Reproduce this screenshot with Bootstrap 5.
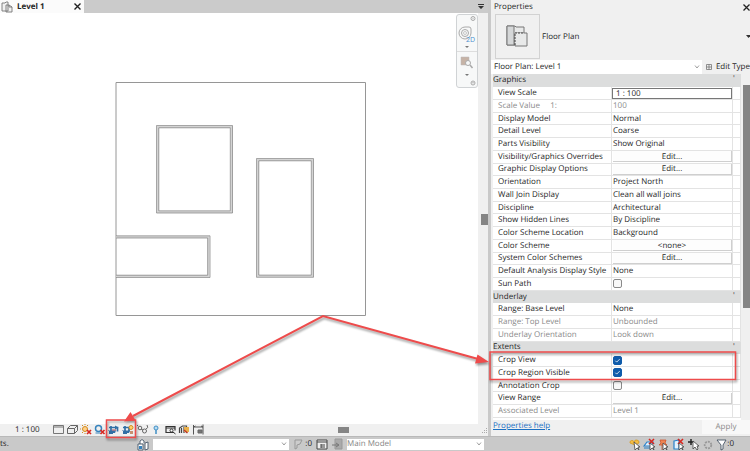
<!DOCTYPE html>
<html lang="en">
<head>
<meta charset="utf-8">
<meta name="viewport" content="width=device-width, initial-scale=1">
<title>Floor Plan: Level 1</title>
<link href="https://cdn.jsdelivr.net/npm/bootstrap@5.3.0/dist/css/bootstrap.min.css" rel="stylesheet">
<style>
  body { font: 8px/12px "Open Sans", "Noto Sans", sans-serif; color: #262626; background: #f0f0f0; text-rendering: geometricPrecision; }
  button, input, select { font: inherit; color: inherit; border: 0; padding: 0; background: none; text-rendering: inherit; }
  svg { display: block; flex: none; }
  .window { min-height: 100vh; }
  .tab-strip { height: 13px; background: #cbcbcb; }
  .doc-tab { width: 84px; background: #fbfbfb; padding: 0 3px 0 1px; }
  .canvas { background: #fff; }
  .plan { min-width: 0; }
  .view-nav { width: 22px; height: 74px; margin-top: 1px; background: #f7f8f8; border: 1px solid #d0d3d5; border-radius: 3px; padding: 1px 0; }
  .v-track { width: 10px; background: #f0f0f0; }
  .v-thumb { width: 7px; height: 11px; background: #858585; margin-top: 201px; }
  .view-bar { height: 12px; padding-left: 15px; }
  .view-icons { margin-left: 13px; }
  .h-thumb { width: 11px; height: 6px; background: #858585; }
  .palette { width: 262px; border-left: 3px solid #c9c9c9; }
  .inset { padding-left: 2px; }
  .title-row { height: 14px; }
  .title-row span { padding-left: 1px; }
  .preview { width: 45px; height: 45px; border: 1px solid #d2d2d2; background: #f0f0f0; }
  .type-name { margin-left: 2px; }
  .drop { appearance: none; background: #fff url("data:image/svg+xml,%3Csvg xmlns='http://www.w3.org/2000/svg' width='6' height='4'%3E%3Cpath d='M1 .5 3 3 5 .5' fill='none' stroke='%23888' stroke-width='.8'/%3E%3C/svg%3E") no-repeat right 2px center; border-radius: 0; min-width: 0; }
  .type-row { height: 14px; margin-top: 1px; }
  .type-row .drop { padding-left: 3px; }
  .grid-wrap { min-width: 0; }
  .props { line-height: 10px; background: #fff; table-layout: fixed; }
  .props td, .props th { padding: 0 0 0 1px; border: 0 solid #e3e3e3; border-width: 0 1px 1px 0; font-weight: 400; height: 12px; white-space: nowrap; text-align: left; vertical-align: middle; }
  .props tbody th:not(.group) { padding-left: 5px; }
  .props .group { background: #dcdddd; border-color: #dcdddd; padding-left: 0; }
  .props .off > * { color: #8a8a8a; }
  .props .cell-btn { display: block; width: 100%; height: 11px; line-height: 9px; background: #fdfdfd; border: 1px solid #cfcfcf; border-width: 0 1px 1px 0; }
  .props .scale-box { display: block; width: 100%; height: 11px; border: 1px solid #777; padding-left: 3px; background: #fff; }
  .tick { display: block; appearance: none; width: 9px; height: 9px; border: 1px solid #8a8a8a; border-radius: 2px; background: #f8f8f8; }
  .tick:checked { border-color: #0f5cab; background: #0f5cab url("data:image/svg+xml,%3Csvg xmlns='http://www.w3.org/2000/svg' viewBox='0 0 7 7'%3E%3Cpath d='m1.3 3.7 1.4 1.4 3-3' fill='none' stroke='%23fff' stroke-width='.8'/%3E%3C/svg%3E") center / 7px no-repeat; }
  .table-tail { height: 2px; background: #fff; }
  .p-thumb { height: 223px; margin-top: 11px; background: #848484; }
  .p-track { width: 7px; margin-left: 2px; }
  .palette-foot { height: 16px; }
  .palette-foot a { color: #1b6fc2; }
  .apply { width: 48px; height: 14px; background: #f8f8f8; color: #8c8c8c; }
  .status { height: 15px; background: #c9c9c9; border-top: 1px solid #b9b9b9; }
  .status .drop { height: 11px; line-height: 10px; color: #858585; }
  .status-left { width: 488px; }
  .overlay { filter: drop-shadow(1px 2px 1px #0006); pointer-events: none; }
</style>
<script src="https://cdn.jsdelivr.net/npm/bootstrap@5.3.0/dist/js/bootstrap.bundle.min.js"></script>
</head>
<body>
<div class="window d-flex flex-column position-relative overflow-hidden">
  <div class="d-flex flex-fill">
    <main class="d-flex flex-column flex-fill">
      <div class="tab-strip d-flex justify-content-between">
        <div class="doc-tab d-flex align-items-center">
          <svg width="12" height="12" fill="#f1f1f1" stroke="#777" stroke-width=".9"><path d="M1 2h3l1-1h2v9H1zM5 4h3l3 2v5H5zM8 4v2h3"/></svg>
          <strong class="ms-1">Level 1</strong>
          <button class="ms-auto" aria-label="Close view"><svg width="7" height="7" stroke="#222" stroke-width="1.4"><path d="m.5.5 6 6m0-6-6 6"/></svg></button>
        </div>
        <button class="px-1" aria-label="View list"><svg width="6" height="6" fill="#333"><path d="M0 0h6v1H0zM0 2h6L3 5z"/></svg></button>
      </div>
      <div class="canvas d-flex flex-fill">
        <svg class="plan flex-fill" width="440" height="411" viewBox="0 13 456 411" preserveAspectRatio="xMinYMin meet" fill="none" stroke="#969696" role="img" aria-label="Floor plan drawing">
          <path d="M116 82.500h249.500v233H116z"/>
          <g stroke="#d4d4d4" stroke-width="2"><path d="M158 127h73.500v85H158zM258 160h54.500v116H258zM116 237h92.500v39H116"/></g>
          <g stroke="#808080" stroke-width=".7"><path d="M156.500 125.500h76v87.500h-76zM158.800 127.800h71.500v83h-71.500zM256.500 158.500h57v118.800h-57zM258.800 160.800h52.500v114.300h-52.500zM116 235.800h94v41.700h-94M116 238h91.700v37.200H116"/></g>
        </svg>
        <div class="view-nav d-flex flex-column align-items-center">
          <svg width="20" height="70" viewBox="457 16 20 70" fill="none" stroke="#aaa">
            <circle cx="473" cy="18.500" r="2"/><path d="m472 17.500 2 2m0-2-2 2" stroke-width=".5"/>
            <path d="M469 27h-4a6 6 0 1 0 6 6v-4q0-2-2-2z"/><circle cx="465" cy="33" r="3.500"/><circle cx="465" cy="33" r="1.500" stroke-width=".6"/>
            <text x="466" y="41.500" font-size="7" fill="#4a90cf" stroke="none">2D</text>
            <path d="M465 46h4l-2 2zM465 74h4l-2 2z" fill="#777" stroke="none"/><path d="M457 51.500h20" stroke="#ddd"/>
            <path d="M461 57h8v8h-8z" fill="#c6b3a6" stroke="#bbb" stroke-width=".5"/><circle cx="468" cy="63" r="2.500" fill="#f7f8f8"/><path d="m470 65 2.500 3" stroke-width="1.500"/>
            <circle cx="473" cy="83" r="2"/><path d="M472 82.500h2l-1 1z" stroke-width=".5"/>
          </svg>
        </div>
        <div class="v-track ms-auto"><div class="v-thumb ms-auto"></div></div>
      </div>
      <div class="view-bar d-flex align-items-center">
        <span>1 : 100</span>
        <div class="view-icons d-flex">
          <svg width="154" height="12" viewBox="53 424 154 12" fill="none" stroke="#666">
            <path d="M53.500 425.500h10v8h-10zM54 427h10" stroke="#777"/>
            <path d="m67.500 428.500 3-3h7v5l-3 3h-7zM67.500 428.500h7v5m0-5 3-3"/>
            <circle cx="85" cy="429" r="2.500" fill="#ffd28a" stroke="#d48b20"/><path d="M85 424v1m0 8v1m-5-5h1m1-4 1 1m5-1-1 1m-5 7 1-1" stroke="#d48b20"/><path d="m87 430 4 4m0-4-4 4" stroke="#d62821" stroke-width="1.700"/>
            <circle cx="98.500" cy="428.500" r="3" stroke="#3783bd" stroke-width="1.500"/><path d="M95.500 433h5" stroke="#3783bd"/><path d="m100.500 430 4 4m0-4-4 4" stroke="#d62821" stroke-width="1.700"/>
            <path d="M108 430.500h8l-1 2.500h-2v1h-4v-3h-1z" fill="#326fa5" stroke="none"/><path d="M111 426v5m-2-3.500h8.500v4" stroke="#326fa5" stroke-width="1.700"/><path d="m115 425.500 3.500 2-3.500 2z" fill="#326fa5" stroke="none"/><path d="M112 430h4" stroke="#a34b58"/>
            <path d="M122 430.500h8l-1 2.500h-2v1h-4v-3h-1z" fill="#326fa5" stroke="none"/><path d="M125 426v5m-2-3.500h6v4" stroke="#326fa5" stroke-width="1.700"/><circle cx="131" cy="427.500" r="2" fill="#ffd36b" stroke="#d48b20"/><path d="M130 431h3v3h-3z" fill="#c98f70" stroke="none"/>
            <circle cx="140" cy="428" r="1.800"/><circle cx="144.500" cy="431" r="2"/><path d="m141 429 2 1m3-1q3-1 1-4m-9 1-1-1"/>
            <circle cx="156" cy="428" r="2" fill="#b8dcf3" stroke="#408fc5"/><path d="M156 430v4" stroke="#408fc5" stroke-width="1.500"/>
            <path d="M174 432.500h-8v-6h9v4M166 428h9" stroke="#333" stroke-width="1.200"/><circle cx="171.500" cy="430.500" r="1.500" fill="#fff" stroke="#333"/><path d="m173 432 2.500 2" stroke="#333"/>
            <path d="M179.500 433v-5l3-2h4v7m-5-5v5m2.500-6v6" stroke="#444" stroke-width="1.200"/><path d="M184 427h5v5h-5z" fill="#e9b04a" stroke="none"/><path d="m184 430 3.500 3" stroke="#c0392b" stroke-width="1.500"/>
            <path d="M193.500 425v9.500m9.500-10v10m-9.500-7.500h9.500m-9.500 0 2-1m7.500 1-2-1" stroke="#555"/><path d="M198 430h4v3h-4z" fill="#777"/>
          </svg>
        </div>
        <div class="h-thumb ms-auto"></div>
        <svg class="ms-auto" width="7" height="7" fill="#aaa"><path d="M5 1h1v1H5zM3 3h1v1H3zm2 0h1v1H5zM1 5h1v1H1zm2 0h1v1H3zm2 0h1v1H5z"/></svg>
      </div>
    </main>

    <aside class="palette d-flex flex-column flex-shrink-0">
      <div class="title-row inset d-flex justify-content-between align-items-center"><span>Properties</span>
        <button aria-label="Close properties"><svg width="7" height="7" stroke="#222" stroke-width="1.300"><path d="m.5.5 6 6m0-6-6 6"/></svg></button>
      </div>
      <div class="d-flex align-items-center ps-1">
        <button class="preview d-flex align-items-center justify-content-center" aria-label="Type preview">
          <svg width="23" height="23" fill="#e8e9e9" stroke="#777"><path d="M1 1h8l1 1h8v18H1z"/><path d="M1 1h7v19H1z" fill="#d5d7d8"/><path d="M9 8h12v13H9z"/><path d="M9 20V8h9" stroke="#444" stroke-dasharray="2 1"/></svg>
        </button>
        <span class="type-name">Floor Plan</span>
        <button class="ms-auto" aria-label="Change type"><svg width="4" height="4" fill="#333"><path d="M0 0h5L2.500 3z"/></svg></button>
      </div>
      <div class="type-row d-flex align-items-center">
        <select class="drop flex-fill h-100" aria-label="View"><option>Floor Plan: Level 1</option></select>
        <button class="d-flex align-items-center text-nowrap ms-1"><svg class="me-1" width="6" height="6" fill="none" stroke="#777" stroke-width=".8"><path d="M.5.5h5v5h-5zM3 .5v5M.5 3h5"/></svg>Edit Type</button>
      </div>
      <div class="d-flex flex-fill">
        <div class="inset grid-wrap d-flex flex-column flex-fill">
          <div class="flex-fill d-flex">
          <table class="props w-100">
            <colgroup><col><col style="width:121px"><col style="width:8px"></colgroup>
            <tbody>
              <tr><th class="group" colspan="2">Graphics</th><td class="group align-top">'</td></tr>
              <tr><th><label for="scale">View Scale</label></th><td class="p-0"><input id="scale" class="scale-box" value="1 : 100"></td><td></td></tr>
              <tr class="off"><th>Scale Value &nbsp; &nbsp; 1:</th><td>100</td><td></td></tr>
              <tr><th>Display Model</th><td>Normal</td><td></td></tr>
              <tr><th>Detail Level</th><td>Coarse</td><td></td></tr>
              <tr><th>Parts Visibility</th><td>Show Original</td><td></td></tr>
              <tr><th>Visibility/Graphics Overrides</th><td><button class="cell-btn">Edit...</button></td><td></td></tr>
              <tr><th>Graphic Display Options</th><td><button class="cell-btn">Edit...</button></td><td></td></tr>
              <tr><th>Orientation</th><td>Project North</td><td></td></tr>
              <tr><th>Wall Join Display</th><td>Clean all wall joins</td><td></td></tr>
              <tr><th>Discipline</th><td>Architectural</td><td></td></tr>
              <tr><th>Show Hidden Lines</th><td>By Discipline</td><td></td></tr>
              <tr><th>Color Scheme Location</th><td>Background</td><td></td></tr>
              <tr><th>Color Scheme</th><td><button class="cell-btn">&lt;none&gt;</button></td><td></td></tr>
              <tr><th>System Color Schemes</th><td><button class="cell-btn">Edit...</button></td><td></td></tr>
              <tr><th>Default Analysis Display Style</th><td>None</td><td></td></tr>
              <tr><th><label for="sun">Sun Path</label></th><td><input type="checkbox" class="tick" id="sun"></td><td></td></tr>
              <tr><th class="group" colspan="2">Underlay</th><td class="group align-top">'</td></tr>
              <tr><th>Range: Base Level</th><td>None</td><td></td></tr>
              <tr class="off"><th>Range: Top Level</th><td>Unbounded</td><td></td></tr>
              <tr class="off"><th>Underlay Orientation</th><td>Look down</td><td></td></tr>
              <tr><th class="group" colspan="2">Extents</th><td class="group align-top">'</td></tr>
              <tr><th><label for="crop">Crop View</label></th><td><input type="checkbox" class="tick" id="crop" checked></td><td></td></tr>
              <tr><th><label for="region">Crop Region Visible</label></th><td><input type="checkbox" class="tick" id="region" checked></td><td></td></tr>
              <tr><th><label for="anno">Annotation Crop</label></th><td><input type="checkbox" class="tick" id="anno"></td><td></td></tr>
              <tr><th>View Range</th><td><button class="cell-btn">Edit...</button></td><td></td></tr>
              <tr class="off"><th>Associated Level</th><td>Level 1</td><td></td></tr>
            </tbody>
          </table>
          </div>
          <div class="table-tail"></div>
        </div>
        <div class="p-track flex-shrink-0"><div class="p-thumb"></div></div>
      </div>
      <div class="palette-foot inset d-flex justify-content-between"><a href="#">Properties help</a><button class="apply">Apply</button></div>
    </aside>
  </div>

  <footer class="status d-flex align-items-center justify-content-between">
    <div class="status-left d-flex align-items-center">
      <span>ts.</span>
      <svg class="ms-auto me-1" width="12" height="13" fill="#fff" stroke="#456" stroke-width=".9"><path d="M1 6h5v6H1zM3 6V3q2-3 4 0v2M8 5l3-1v7l-3 1z"/><path d="M2 8h3v3H2z" fill="#3783bd" stroke="none"/></svg>
      <select class="drop" style="width:136px" aria-label="Workset"><option></option></select>
      <svg class="ms-1" width="12" height="12" fill="#ccc" stroke="#999"><path d="M2 2h7L7 6 4 7v3L2 11V8z"/></svg>
      <span>:0</span>
      <button class="mx-1" aria-label="Design options"><svg width="12" height="12" fill="#eee" stroke="#444"><path d="M1 2h10v9H1zM1 4h10M5 6v4m0-3h4m-4 2h4"/></svg></button>
      <svg width="11" height="12" fill="#aaa" stroke="#999"><path d="M3 1h7v10H3z"/><path d="M0 7h6M4 5l3 2-3 2" stroke="#777"/></svg>
      <select class="drop me-1 ms-1" style="width:137px" aria-label="Design option"><option>Main Model</option></select>
    </div>
    <div class="d-flex align-items-center pe-3">
      <svg width="99" height="13" viewBox="628 438 99 13" fill="#fff" stroke="#444" stroke-width=".8">
        <path d="M630 443a2 2 0 0 1 4-1 2 2 0 0 1 5 1l-4 2z" fill="#f4bd45" stroke="#d59a20"/><path d="m634 442 1 8 2-2 2 2-1-3h2z"/>
        <path d="m644 446 3-4h6l-2 4zM644 448h7" fill="#e4f2fc" stroke="#2980c9" stroke-width="1.200"/><path d="m649 439 5 5m0-5-5 5" stroke="#d62821" stroke-width="1.600"/><path d="m650 443 0 7 2-2 2 2-1-3h2z"/>
        <path d="M660 440h6l-1 3 2 2h-8l2-2zM662 445v5" fill="#ef8654" stroke="#cf572d"/><path d="m663 443 0 7 2-2 2 2-1-3h2z"/>
        <path d="m674 441 5-1v9h-5z" fill="#e4f2fc" stroke="#2980c9" stroke-width="1.200"/><path d="m678 439 5 5m0-5-5 5" stroke="#d62821" stroke-width="1.600"/><path d="m679 443 0 7 2-2 2 2-1-3h2z"/>
        <path d="M688 442h6m-3-3v6" stroke="#222" stroke-width="1.500"/><path d="m693 441 0 8 2-2 2 3 1-1-1-3h2z"/>
        <circle cx="708" cy="445" r="3.300" fill="none" stroke="#999" stroke-width="1.800" stroke-dasharray="2 1"/>
        <path d="M717 440h9l-3 5v4l-2 1v-5z" stroke="#345"/>
      </svg>
      <span>:0</span>
    </div>
  </footer>

  <svg class="overlay position-absolute top-0 start-0 w-100 h-100" fill="none" stroke="#ee4b4b" stroke-width="2" aria-hidden="true">
    <path d="M106.500 420h29v17.500h-29zM490 352h245.500v27.500H490z" stroke-width="1.500"/>
    <path d="M133 416 323 316 480 359.500"/>
    <path d="m124 421.500 6.500-9.500 5 8.500zM489 362l-11.500-7.500-2.500 9z" fill="#ee4b4b" stroke="none"/>
  </svg>
</div>
</body>
</html>
